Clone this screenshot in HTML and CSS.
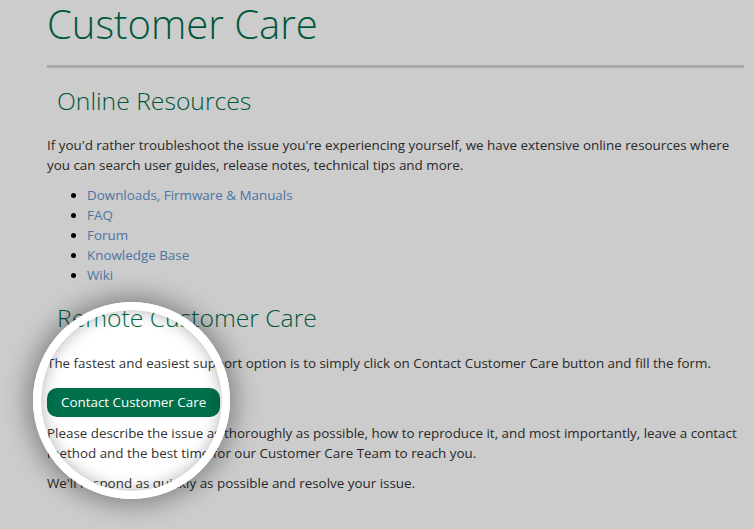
FILE: index.html
```html
<!DOCTYPE html>
<html>
<head>
<meta charset="utf-8">
<link rel="stylesheet" href="styles.css">
</head>
<body>
<main class="page">
  <h1 class="title">Customer Care</h1>
  <hr class="rule">
  <section class="block">
    <h2 class="subtitle">Online Resources</h2>
    <p class="text">If you'd rather troubleshoot the issue you're experiencing yourself, we have extensive online resources where you can search user guides, release notes, technical tips and more.</p>
    <ul class="links">
      <li><a href="#">Downloads, Firmware &amp; Manuals</a></li>
      <li><a href="#">FAQ</a></li>
      <li><a href="#">Forum</a></li>
      <li><a href="#">Knowledge Base</a></li>
      <li><a href="#">Wiki</a></li>
    </ul>
  </section>
  <section class="block">
    <h2 class="subtitle">Remote Customer Care</h2>
    <p class="text">The fastest and easiest support option is to simply click on Contact Customer Care button and fill the form.</p>
    <div class="actions"><a class="btn" href="#">Contact Customer Care</a></div>
    <p class="text">Please describe the issue as thoroughly as possible, how to reproduce it, and most importantly, leave a contact method and the best time for our Customer Care Team to reach you.</p>
    <p class="text">We'll respond as quickly as possible and resolve your issue.</p>
  </section>
</main>
<div class="spotlight"></div>
</body>
</html>
```
FILE: styles.css
```css
html, body {
  margin: 0;
  padding: 0;
  background: #fff;
  overflow: hidden;
}
body {
  width: 754px;
  height: 529px;
  font-family: "Open Sans", "Liberation Sans", sans-serif;
  color: #333;
  position: relative;
}
.page {
  padding: 0 10px 0 47px;
}
.title {
  margin: 0;
  padding-top: 0;
  font-weight: 300;
  font-size: 40px;
  line-height: 48px;
  color: #006f4b;
}
.rule {
  margin: 17px 0 0 0;
  border: 0;
  height: 3px;
  background: #d5d5d5;
}
.subtitle {
  margin: 0;
  padding-left: 10px;
  font-weight: 300;
  font-size: 24.7px;
  line-height: 32px;
  color: #006f4b;
}
.block:first-of-type .subtitle {
  margin-top: 17px;
}
.block + .block .subtitle {
  margin-top: 17px;
}
.text {
  font-size: 13.4px;
  line-height: 20px;
  margin: 10px 0 0 0;
}
.block:first-of-type .text { margin-top: 18px; }
.block + .block .subtitle + .text { margin-top: 19px; }
.links {
  margin: 10px 0 0 0;
  padding-left: 40px;
  font-size: 13.4px;
  line-height: 20px;
  color: #000;
}
.links a {
  color: #5d94cf;
  text-decoration: none;
}
.actions {
  margin-top: 15px;
  margin-bottom: 6px;
}
.btn {
  display: inline-block;
  background: #006f4b;
  color: #fff;
  font-size: 13.4px;
  line-height: 29px;
  padding: 0 14px;
  border-radius: 10px;
  text-decoration: none;
}
.actions + .text { margin-top: 0; }
.spotlight {
  position: absolute;
  left: 33px;
  top: 302px;
  width: 197px;
  height: 197px;
  box-sizing: border-box;
  border: 8px solid #fff;
  border-radius: 50%;
  box-shadow: 0 0 0 2000px rgba(0, 0, 0, 0.2), 0 0 24px 6px rgba(0, 0, 0, 0.35), inset 0 0 16px rgba(0, 0, 0, 0.3);
  pointer-events: none;
}
```
